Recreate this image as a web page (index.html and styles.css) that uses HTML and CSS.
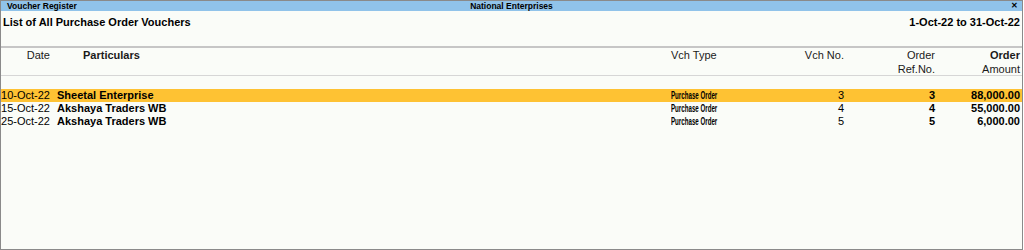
FILE: index.html
```html
<!DOCTYPE html>
<html>
<head>
<meta charset="utf-8">
<link rel="stylesheet" href="styles.css">
</head>
<body>
<div class="window">
  <div class="titlebar">
    <span class="t-left">Voucher Register</span>
    <span class="t-center">National Enterprises</span>
    <span class="t-right">✕</span>
  </div>
  <div class="report-head">
    <span class="report-title">List of All Purchase Order Vouchers</span>
    <span class="report-period">1-Oct-22 to 31-Oct-22</span>
  </div>
  <div class="colhead">
    <div class="c-date">Date</div>
    <div class="c-part hpart">Particulars</div>
    <div class="c-type">Vch Type</div>
    <div class="c-no">Vch No.</div>
    <div class="c-ref">Order<br>Ref.No.</div>
    <div class="c-amt"><b>Order</b><br>Amount</div>
  </div>
  <div class="rows">
    <div class="row selected">
      <div class="c-date">10-Oct-22</div>
      <div class="c-part">Sheetal Enterprise</div>
      <div class="c-type"><span class="narrow">Purchase Order</span></div>
      <div class="c-no">3</div>
      <div class="c-ref b">3</div>
      <div class="c-amt b">88,000.00</div>
    </div>
    <div class="row">
      <div class="c-date">15-Oct-22</div>
      <div class="c-part">Akshaya Traders WB</div>
      <div class="c-type"><span class="narrow">Purchase Order</span></div>
      <div class="c-no">4</div>
      <div class="c-ref b">4</div>
      <div class="c-amt b">55,000.00</div>
    </div>
    <div class="row">
      <div class="c-date">25-Oct-22</div>
      <div class="c-part">Akshaya Traders WB</div>
      <div class="c-type"><span class="narrow">Purchase Order</span></div>
      <div class="c-no">5</div>
      <div class="c-ref b">5</div>
      <div class="c-amt b">6,000.00</div>
    </div>
  </div>
</div>
</body>
</html>
```
FILE: styles.css
```css
html, body {
  margin: 0;
  padding: 0;
  background: #ffffff;
}
body {
  font-family: "Liberation Sans", Arial, sans-serif;
  font-size: 11px;
  color: #000;
}
.window {
  box-sizing: border-box;
  width: 1023px;
  height: 250px;
  border: 1px solid #8a8a8a;
  background: #fafcf8;
  display: flex;
  flex-direction: column;
}
.titlebar {
  height: 10px;
  background: #90c3ea;
  display: grid;
  grid-template-columns: 1fr auto 1fr;
  align-items: center;
  font-size: 8.5px;
  font-weight: bold;
  line-height: 10px;
  color: #000;
}
.t-left { padding-left: 6px; }
.t-center { text-align: center; }
.t-right {
  text-align: right;
  padding-right: 4px;
  font-size: 8px;
}
.report-head {
  display: flex;
  justify-content: space-between;
  padding: 4px 2px 0 2px;
  height: 31px;
  line-height: 14px;
  font-weight: bold;
  border-bottom: 2px solid #c6c6c6;
}
.colhead, .row {
  display: grid;
  grid-template-columns: 49px 621px 101px 72px 91px 85px;
  column-gap: 0;
}
.colhead {
  height: 27px;
  line-height: 14px;
  border-bottom: 1px solid #d6d6d6;
  color: #1a1a1a;
}
.rows {
  padding-top: 13px;
}
.row {
  height: 13px;
  line-height: 13px;
}
.row.selected {
  background: #fec233;
}
.c-date { text-align: right; white-space: nowrap; }
.c-part { padding-left: 7px; font-weight: bold; white-space: nowrap; }
.hpart { padding-left: 33px; }
.c-type { white-space: nowrap; }
.c-no, .c-ref, .c-amt { text-align: right; white-space: nowrap; }
.b { font-weight: bold; }
.narrow {
  display: inline-block;
  font-weight: bold;
  font-size: 11px;
  transform: scaleX(0.56);
  transform-origin: left center;
}
```
